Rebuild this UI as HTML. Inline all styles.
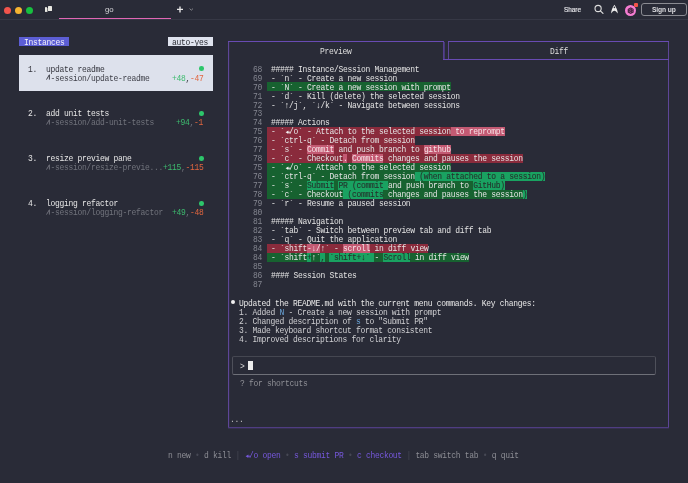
<!DOCTYPE html>
<html><head><meta charset="utf-8"><style>
html,body{margin:0;padding:0;}
body{width:688px;height:483px;overflow:hidden;background:#292b37;position:relative;}
.r{position:absolute;}
.t{position:absolute;will-change:transform;transform:scaleY(1.12);transform-origin:0 6.6px;white-space:pre;font-family:"Liberation Mono",monospace;font-size:8px;letter-spacing:-0.305px;line-height:8.98px;color:#e4e4e4;}
.s{position:absolute;will-change:transform;white-space:pre;font-family:"Liberation Sans",sans-serif;line-height:1;}
.lam{}
.ret{display:inline-block;width:4.495px;overflow:hidden;}
</style></head><body>

<div class="r" style="left:0;top:19px;width:688px;height:1px;background:#363845"></div>
<div class="r" style="left:59px;top:18px;width:112px;height:1px;background:#e066b4"></div>
<div class="r" style="left:3.6px;top:6.5px;width:7px;height:7px;border-radius:50%;background:#f2544c"></div>
<div class="r" style="left:14.9px;top:6.5px;width:7px;height:7px;border-radius:50%;background:#f6b431"></div>
<div class="r" style="left:26px;top:6.5px;width:7px;height:7px;border-radius:50%;background:#17c03f"></div>
<div class="r" style="left:45px;top:7px;width:2.1px;height:5px;background:#e8e8e2;border-radius:0.4px"></div>
<div class="r" style="left:47px;top:8px;width:1.2px;height:3.5px;background:#77777a"></div>
<div class="r" style="left:48.2px;top:6.4px;width:4px;height:4.7px;background:#e8e8e2;border-radius:0.6px"></div>
<div class="s" style="left:105.3px;top:6px;font-size:7.8px;color:#d4d4d8">go</div>
<svg class="r" style="left:174px;top:3px" width="20" height="13" viewBox="0 0 20 13">
  <path d="M3 6.4H9M6 3.4V9.4" stroke="#e6e6e6" stroke-width="1.4"/>
  <path d="M15.6 5.6L17.3 7.2L19 5.6" stroke="#9a9aa0" stroke-width="0.8" fill="none"/>
</svg>
<div class="s" style="left:563.5px;top:7px;font-size:6.4px;color:#e4e4e8;-webkit-text-stroke:0.15px #e4e4e8">Share</div>
<svg class="r" style="left:592px;top:3px" width="14" height="13" viewBox="0 0 14 13">
  <circle cx="6.1" cy="5.5" r="3.1" stroke="#dcdcdc" stroke-width="1.1" fill="none"/>
  <path d="M8.4 7.8L11 10.4" stroke="#dcdcdc" stroke-width="1.2" stroke-linecap="round"/>
</svg>
<svg class="r" style="left:609px;top:3px" width="12" height="13" viewBox="0 0 12 13">
  <path d="M5.4 1.8 C3.6 4.2 2.1 7.5 2.1 10.5 C3.2 9.1 4.3 7.8 5.4 7.8 C6.5 7.8 7.6 9.1 8.8 10.5 C8.8 7.5 7.2 4.2 5.4 1.8 Z" fill="#ececec"/>
  <circle cx="5.4" cy="4.4" r="0.8" fill="#292b37"/>
</svg>
<div class="r" style="left:624.8px;top:4.6px;width:11.4px;height:11.4px;border-radius:50%;background:#f57dd2"></div>
<svg class="r" style="left:624.8px;top:4.6px" width="11.4" height="11.4" viewBox="0 0 11.4 11.4">
  <path d="M5.7 2.3 L8.7 4 L8.7 7.4 L5.7 9.1 L2.7 7.4 L2.7 4 Z" fill="#4b2343"/>
  <g fill="#e070c0">
   <circle cx="5.7" cy="3.9" r="0.45"/><circle cx="5.7" cy="7.5" r="0.45"/>
   <circle cx="4.2" cy="4.8" r="0.45"/><circle cx="7.2" cy="4.8" r="0.45"/>
   <circle cx="4.2" cy="6.6" r="0.45"/><circle cx="7.2" cy="6.6" r="0.45"/>
   <circle cx="5.7" cy="5.7" r="0.45"/>
  </g>
</svg>
<div class="r" style="left:633.9px;top:3px;width:4.3px;height:4.2px;border-radius:1px;background:#f2544a"></div>
<div class="r" style="left:641px;top:3px;width:43.5px;height:11px;border:1px solid #8a8b92;border-radius:3px"></div>
<div class="s" style="left:652px;top:7px;font-size:6.7px;font-weight:bold;color:#dedee2;letter-spacing:-0.12px">Sign up</div>

<div class="r" style="left:19px;top:37px;width:50px;height:9px;background:#5c5ed4;"></div>
<div class="t" style="left:23.60px;top:38px;color:#f2f2f8;">Instances</div>
<div class="r" style="left:168px;top:37px;width:45px;height:9px;background:#dfe3ee;"></div>
<div class="t" style="left:171.93px;top:38px;color:#2a2b33;-webkit-text-stroke:0;">auto-yes</div>
<div class="r" style="left:19px;top:55px;width:194px;height:36px;background:#dde1ec;"></div>
<div class="t" style="left:28.09px;top:65px;color:#34353d;">1.</div>
<div class="t" style="left:46.07px;top:65px;color:#34353d;">update readme</div>
<div class="t" style="left:46.07px;top:74px;color:#3c3d46;"> -session/update-readme</div>
<svg class="r" style="left:46.27px;top:73.27px" width="5" height="9" viewBox="0 0 5 9"><path d="M0.5 6.6 L3.4 1.7 M3.4 1.9 V6.6" stroke="#3c3d46" stroke-width="0.95" fill="none"/></svg>
<div class="t" style="left:171.93px;top:74px;"><span style="color:#3dbb6e">+48</span><span style="color:#3c3d46">,</span><span style="color:#e2663f">-47</span></div>
<div class="r" style="left:199.05px;top:66.49px;width:4.6px;height:4.6px;border-radius:50%;background:#2dc66b"></div>
<div class="t" style="left:28.09px;top:109px;color:#e6e6e6;">2.</div>
<div class="t" style="left:46.07px;top:109px;color:#e6e6e6;">add unit tests</div>
<div class="t" style="left:46.07px;top:118px;color:#71737c;"> -session/add-unit-tests</div>
<svg class="r" style="left:46.27px;top:118.17px" width="5" height="9" viewBox="0 0 5 9"><path d="M0.5 6.6 L3.4 1.7 M3.4 1.9 V6.6" stroke="#71737c" stroke-width="0.95" fill="none"/></svg>
<div class="t" style="left:176.43px;top:118px;"><span style="color:#3dbb6e">+94</span><span style="color:#71737c">,</span><span style="color:#e2663f">-1</span></div>
<div class="r" style="left:199.05px;top:111.39px;width:4.6px;height:4.6px;border-radius:50%;background:#2dc66b"></div>
<div class="t" style="left:28.09px;top:154px;color:#e6e6e6;">3.</div>
<div class="t" style="left:46.07px;top:154px;color:#e6e6e6;">resize preview pane</div>
<div class="t" style="left:46.07px;top:163px;color:#71737c;"> -session/resize-previe...</div>
<svg class="r" style="left:46.27px;top:163.07px" width="5" height="9" viewBox="0 0 5 9"><path d="M0.5 6.6 L3.4 1.7 M3.4 1.9 V6.6" stroke="#71737c" stroke-width="0.95" fill="none"/></svg>
<div class="t" style="left:162.94px;top:163px;"><span style="color:#3dbb6e">+115</span><span style="color:#71737c">,</span><span style="color:#e2663f">-115</span></div>
<div class="r" style="left:199.05px;top:156.29px;width:4.6px;height:4.6px;border-radius:50%;background:#2dc66b"></div>
<div class="t" style="left:28.09px;top:199px;color:#e6e6e6;">4.</div>
<div class="t" style="left:46.07px;top:199px;color:#e6e6e6;">logging refactor</div>
<div class="t" style="left:46.07px;top:208px;color:#71737c;"> -session/logging-refactor</div>
<svg class="r" style="left:46.27px;top:207.97px" width="5" height="9" viewBox="0 0 5 9"><path d="M0.5 6.6 L3.4 1.7 M3.4 1.9 V6.6" stroke="#71737c" stroke-width="0.95" fill="none"/></svg>
<div class="t" style="left:171.93px;top:208px;"><span style="color:#3dbb6e">+49</span><span style="color:#71737c">,</span><span style="color:#e2663f">-48</span></div>
<div class="r" style="left:199.05px;top:201.19px;width:4.6px;height:4.6px;border-radius:50%;background:#2dc66b"></div>
<div class="r" style="left:228px;top:42px;width:1px;height:385px;background:#5e4698;"></div>
<div class="r" style="left:229px;top:42px;width:1px;height:385px;background:#2f2d45;"></div>
<div class="r" style="left:228px;top:41px;width:216px;height:1px;background:#684bb3;"></div>
<div class="r" style="left:448px;top:41px;width:221px;height:1px;background:#684bb3;"></div>
<div class="r" style="left:668px;top:42px;width:1px;height:385px;background:#5e4698;"></div>
<div class="r" style="left:228px;top:427px;width:441px;height:1px;background:#4f3d82;"></div>
<div class="r" style="left:228px;top:428px;width:441px;height:1px;background:#35304f;"></div>
<div class="r" style="left:443px;top:42px;width:1px;height:18px;background:#54408c;"></div>
<div class="r" style="left:444px;top:42px;width:1px;height:18px;background:#47397a;"></div>
<div class="r" style="left:448px;top:42px;width:1px;height:17px;background:#5e4698;"></div>
<div class="r" style="left:443px;top:59px;width:226px;height:1px;background:#684bb3;"></div>
<div class="t" style="left:320.27px;top:47px;color:#dedede;">Preview</div>
<div class="t" style="left:549.51px;top:47px;color:#dedede;">Diff</div>
<div class="t" style="left:252.84px;top:65px;color:#858791;">68</div>
<div class="t" style="left:270.82px;top:65px;color:#e4e4e4;">##### Instance/Session Management</div>
<div class="t" style="left:252.84px;top:74px;color:#858791;">69</div>
<div class="t" style="left:270.82px;top:74px;color:#e4e4e4;">- `n` - Create a new session</div>
<div class="t" style="left:252.84px;top:83px;color:#858791;">70</div>
<div class="r" style="left:267px;top:82px;width:184px;height:9px;background:#176230;"></div>
<div class="t" style="left:270.82px;top:83px;color:#e4e4e4;">- `N` - Create a new session with prompt</div>
<div class="t" style="left:252.84px;top:92px;color:#858791;">71</div>
<div class="t" style="left:270.82px;top:92px;color:#e4e4e4;">- `d` - Kill (delete) the selected session</div>
<div class="t" style="left:252.84px;top:101px;color:#858791;">72</div>
<div class="t" style="left:270.82px;top:101px;color:#e4e4e4;">- `↑/j`, `↓/k` - Navigate between sessions</div>
<div class="t" style="left:252.84px;top:109px;color:#858791;">73</div>
<div class="t" style="left:252.84px;top:118px;color:#858791;">74</div>
<div class="t" style="left:270.82px;top:118px;color:#e4e4e4;">##### Actions</div>
<div class="t" style="left:252.84px;top:127px;color:#858791;">75</div>
<div class="r" style="left:267px;top:127px;width:238px;height:9px;background:#8a2b3c;"></div>
<div class="r" style="left:451px;top:127px;width:54px;height:9px;background:#c35a73;"></div>
<svg class="r" style="left:284.50px;top:127.15px" width="7" height="9" viewBox="0 0 7 9"><path d="M0.6 5.2 L3.4 3.5 L3.4 6.9 Z" fill="#f2f2f2"/><path d="M3 5.2 H5.4" stroke="#f2f2f2" stroke-width="1" fill="none"/></svg>
<div class="t" style="left:270.82px;top:127px;color:#e4e4e4;">- ` /o` - Attach to the selected session<span style="color:#f6e2e6"> to reprompt</span></div>
<div class="t" style="left:252.84px;top:136px;color:#858791;">76</div>
<div class="r" style="left:267px;top:136px;width:148px;height:9px;background:#8a2b3c;"></div>
<div class="t" style="left:270.82px;top:136px;color:#e4e4e4;">- `ctrl-q` - Detach from session</div>
<div class="t" style="left:252.84px;top:145px;color:#858791;">77</div>
<div class="r" style="left:267px;top:145px;width:184px;height:9px;background:#8a2b3c;"></div>
<div class="r" style="left:307px;top:145px;width:27px;height:9px;background:#c35a73;"></div>
<div class="r" style="left:424px;top:145px;width:27px;height:9px;background:#c35a73;"></div>
<div class="t" style="left:270.82px;top:145px;color:#e4e4e4;">- `s` - <span style="color:#f6e2e6">Commit</span> and push branch to <span style="color:#f6e2e6">github</span></div>
<div class="t" style="left:252.84px;top:154px;color:#858791;">78</div>
<div class="r" style="left:267px;top:154px;width:256px;height:9px;background:#8a2b3c;"></div>
<div class="r" style="left:343px;top:154px;width:4px;height:9px;background:#c35a73;"></div>
<div class="r" style="left:352px;top:154px;width:31px;height:9px;background:#c35a73;"></div>
<div class="t" style="left:270.82px;top:154px;color:#e4e4e4;">- `c` - Checkout<span style="color:#f6e2e6">.</span> <span style="color:#f6e2e6">Commits</span> changes and pauses the session</div>
<div class="t" style="left:252.84px;top:163px;color:#858791;">75</div>
<div class="r" style="left:267px;top:163px;width:184px;height:9px;background:#176230;"></div>
<svg class="r" style="left:284.50px;top:163.07px" width="7" height="9" viewBox="0 0 7 9"><path d="M0.6 5.2 L3.4 3.5 L3.4 6.9 Z" fill="#f2f2f2"/><path d="M3 5.2 H5.4" stroke="#f2f2f2" stroke-width="1" fill="none"/></svg>
<div class="t" style="left:270.82px;top:163px;color:#e4e4e4;">- ` /o` - Attach to the selected session</div>
<div class="t" style="left:252.84px;top:172px;color:#858791;">76</div>
<div class="r" style="left:267px;top:172px;width:278px;height:9px;background:#176230;"></div>
<div class="r" style="left:415px;top:172px;width:130px;height:9px;background:#19a261;"></div>
<div class="t" style="left:270.82px;top:172px;color:#e4e4e4;">- `ctrl-q` - Detach from session<span style="color:#25332d;-webkit-text-stroke:0.08px currentColor"> (when attached to a session)</span></div>
<div class="t" style="left:252.84px;top:181px;color:#858791;">77</div>
<div class="r" style="left:267px;top:181px;width:238px;height:9px;background:#176230;"></div>
<div class="r" style="left:307px;top:181px;width:27px;height:9px;background:#19a261;"></div>
<div class="r" style="left:338px;top:181px;width:50px;height:9px;background:#19a261;"></div>
<div class="r" style="left:473px;top:181px;width:32px;height:9px;background:#19a261;"></div>
<div class="t" style="left:270.82px;top:181px;color:#e4e4e4;">- `s` - <span style="color:#25332d;-webkit-text-stroke:0.08px currentColor">Submit</span> <span style="color:#25332d;-webkit-text-stroke:0.08px currentColor">PR (commit </span>and push branch to <span style="color:#25332d;-webkit-text-stroke:0.08px currentColor">GitHub)</span></div>
<div class="t" style="left:252.84px;top:190px;color:#858791;">78</div>
<div class="r" style="left:267px;top:190px;width:260px;height:9px;background:#176230;"></div>
<div class="r" style="left:343px;top:190px;width:40px;height:9px;background:#19a261;"></div>
<div class="r" style="left:523px;top:190px;width:4px;height:9px;background:#19a261;"></div>
<div class="t" style="left:270.82px;top:190px;color:#e4e4e4;">- `c` - Checkout<span style="color:#25332d;-webkit-text-stroke:0.08px currentColor"> (commits</span> changes and pauses the session<span style="color:#25332d;-webkit-text-stroke:0.08px currentColor">)</span></div>
<div class="t" style="left:252.84px;top:199px;color:#858791;">79</div>
<div class="t" style="left:270.82px;top:199px;color:#e4e4e4;">- `r` - Resume a paused session</div>
<div class="t" style="left:252.84px;top:208px;color:#858791;">80</div>
<div class="t" style="left:252.84px;top:217px;color:#858791;">81</div>
<div class="t" style="left:270.82px;top:217px;color:#e4e4e4;">##### Navigation</div>
<div class="t" style="left:252.84px;top:226px;color:#858791;">82</div>
<div class="t" style="left:270.82px;top:226px;color:#e4e4e4;">- `tab` - Switch between preview tab and diff tab</div>
<div class="t" style="left:252.84px;top:235px;color:#858791;">83</div>
<div class="t" style="left:270.82px;top:235px;color:#e4e4e4;">- `q` - Quit the application</div>
<div class="t" style="left:252.84px;top:244px;color:#858791;">84</div>
<div class="r" style="left:267px;top:244px;width:161px;height:9px;background:#8a2b3c;"></div>
<div class="r" style="left:307px;top:244px;width:13px;height:9px;background:#c35a73;"></div>
<div class="r" style="left:343px;top:244px;width:27px;height:9px;background:#c35a73;"></div>
<div class="t" style="left:270.82px;top:244px;color:#e4e4e4;">- `shift<span style="color:#f6e2e6">-↓/</span>↑` - <span style="color:#f6e2e6">scroll</span> in diff view</div>
<div class="t" style="left:252.84px;top:253px;color:#858791;">84</div>
<div class="r" style="left:267px;top:253px;width:202px;height:9px;background:#176230;"></div>
<div class="r" style="left:307px;top:253px;width:4px;height:9px;background:#19a261;"></div>
<div class="r" style="left:320px;top:253px;width:5px;height:9px;background:#19a261;"></div>
<div class="r" style="left:329px;top:253px;width:45px;height:9px;background:#19a261;"></div>
<div class="r" style="left:383px;top:253px;width:27px;height:9px;background:#19a261;"></div>
<div class="t" style="left:270.82px;top:253px;color:#e4e4e4;">- `shift<span style="color:#25332d;-webkit-text-stroke:0.08px currentColor">+</span>↑`<span style="color:#25332d;-webkit-text-stroke:0.08px currentColor">,</span> <span style="color:#25332d;-webkit-text-stroke:0.08px currentColor">`shift+↓` </span>- <span style="color:#25332d;-webkit-text-stroke:0.08px currentColor">Scroll</span> in diff view</div>
<div class="t" style="left:252.84px;top:262px;color:#858791;">85</div>
<div class="t" style="left:252.84px;top:271px;color:#858791;">86</div>
<div class="t" style="left:270.82px;top:271px;color:#e4e4e4;">#### Session States</div>
<div class="t" style="left:252.84px;top:280px;color:#858791;">87</div>
<div class="r" style="left:230.72px;top:300.27px;width:4.2px;height:4.2px;border-radius:50%;background:#f0f0f0"></div>
<div class="t" style="left:239.35px;top:299px;color:#e8e8e8;">Updated the README.md with the current menu commands. Key changes:</div>
<div class="t" style="left:239.35px;top:308px;color:#cfcfd2;">1. Added <span style="color:#6aa6dc">N</span> - Create a new session with prompt</div>
<div class="t" style="left:239.35px;top:317px;color:#cfcfd2;">2. Changed description of <span style="color:#6aa6dc">s</span> to "Submit PR"</div>
<div class="t" style="left:239.35px;top:326px;color:#cfcfd2;">3. Made keyboard shortcut format consistent</div>
<div class="t" style="left:239.35px;top:335px;color:#cfcfd2;">4. Improved descriptions for clarity</div>
<div class="r" style="left:232px;top:356px;width:422px;height:16.5px;border:1px solid #4e505a;border-top-color:#454751;border-bottom-color:#6e7078;border-radius:2px;background:transparent"></div>
<div class="t" style="left:239.35px;top:362px;color:#d8d8d8;margin-left:0.5px;">&gt;</div>
<div class="r" style="left:248px;top:361px;width:5px;height:9px;background:#ececec;"></div>
<div class="t" style="left:239.35px;top:379px;color:#8f9096;margin-left:0.7px;">? for shortcuts</div>
<div class="t" style="left:230.37px;top:415px;color:#c4c4c4;">...</div>
<div class="t" style="left:167.44px;top:451px;margin-left:0.8px;"><span style="color:#8d8e95">n new</span> <span style="color:#464854">•</span> <span style="color:#8d8e95">d kill</span> <span style="color:#464854">|</span> <span style="color:#7658dc"> /o open</span> <span style="color:#464854">•</span> <span style="color:#7658dc">s submit PR</span> <span style="color:#464854">•</span> <span style="color:#7658dc">c checkout</span> <span style="color:#464854">|</span> <span style="color:#8d8e95">tab switch tab</span> <span style="color:#464854">•</span> <span style="color:#8d8e95">q quit</span></div>
<div style="position:absolute;left:0.8px;top:1px">
<svg class="r" style="left:244.05px;top:450.43px" width="7" height="9" viewBox="0 0 7 9"><path d="M0.6 5.2 L3.4 3.5 L3.4 6.9 Z" fill="#7658dc"/><path d="M3 5.2 H5.4" stroke="#7658dc" stroke-width="1" fill="none"/></svg>
</div>
</body></html>
